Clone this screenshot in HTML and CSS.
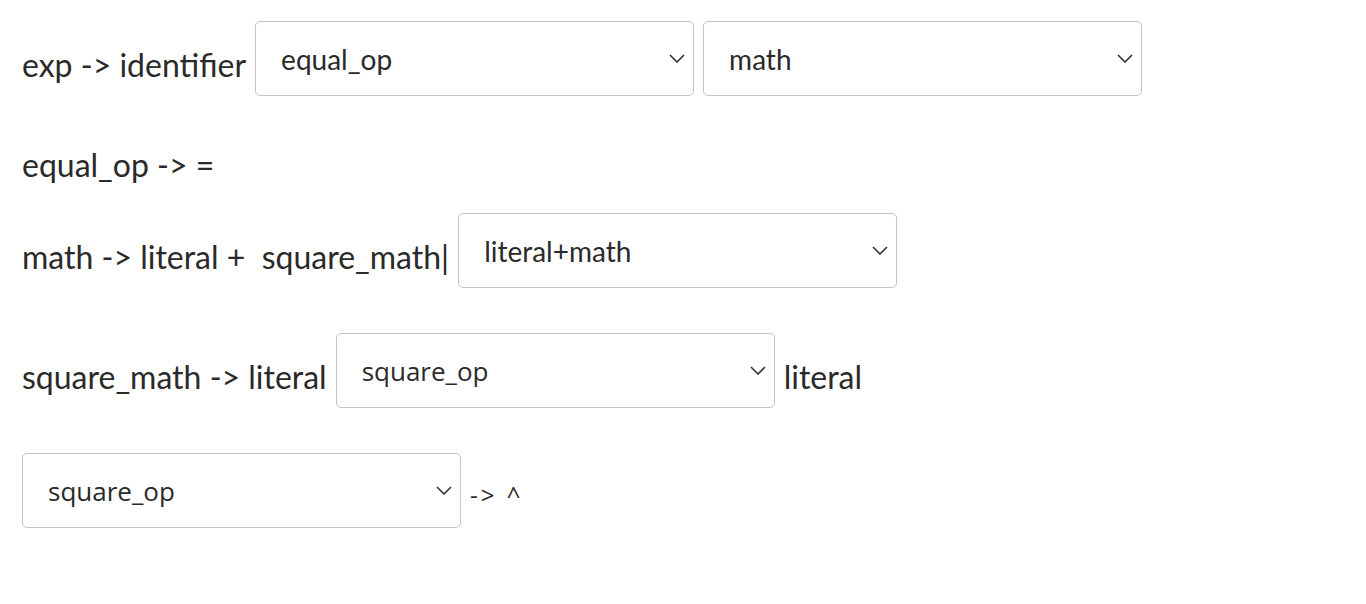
FILE: index.html
```html
<!DOCTYPE html>
<html lang="en">
<head>
    <meta charset="UTF-8">
    <meta name="viewport" content="width=device-width, initial-scale=1.0">
    <title>Grammar</title>
    <link rel="stylesheet" href="styles.css">
</head>
<body>
    <div class="grammar">
        <div class="rule rule1">
            <span class="label">exp -&gt; identifier</span>
            <span class="pick_box">
                <select class="pick">
                    <option>equal_op</option>
                    <option>math</option>
                </select>
                <svg class="arrow" viewBox="0 0 16 9"><path d="M1 1l7 7 7-7"/></svg>
            </span>
            <span class="pick_box">
                <select class="pick">
                    <option>math</option>
                    <option>equal_op</option>
                </select>
                <svg class="arrow" viewBox="0 0 16 9"><path d="M1 1l7 7 7-7"/></svg>
            </span>
        </div>
        <div class="rule rule2">
            <span class="label">equal_op -&gt; =</span>
        </div>
        <div class="rule">
            <span class="label">math -&gt; literal + &nbsp;square_math|</span>
            <span class="pick_box">
                <select class="pick">
                    <option>literal+math</option>
                    <option>literal</option>
                </select>
                <svg class="arrow" viewBox="0 0 16 9"><path d="M1 1l7 7 7-7"/></svg>
            </span>
        </div>
        <div class="rule">
            <span class="label">square_math -&gt; literal</span>
            <span class="pick_box">
                <select class="pick alt">
                    <option>square_op</option>
                    <option>equal_op</option>
                </select>
                <svg class="arrow" viewBox="0 0 16 9"><path d="M1 1l7 7 7-7"/></svg>
            </span>
            <span class="label">literal</span>
        </div>
        <div class="rule">
            <span class="pick_box">
                <select class="pick alt">
                    <option>square_op</option>
                    <option>equal_op</option>
                </select>
                <svg class="arrow" viewBox="0 0 16 9"><path d="M1 1l7 7 7-7"/></svg>
            </span>
            <span class="small">-&gt; ^</span>
        </div>
    </div>
</body>
</html>
```

FILE: styles.css
```css
*{
    margin: 0;
    padding: 0;
}
body{
    font-family: Lato, "Liberation Sans", sans-serif;
    color: #2a2a2a;
    background: #fff;
}
.grammar{
    padding: 21px 22px;
}
.rule{
    display: flex;
    align-items: center;
    gap: 9px;
    margin-bottom: 45px;
}
.rule2{
    height: 40px;
    margin-bottom: 32px;
}
.label{
    font-size: 32px;
    padding-top: 12px;
    white-space: pre;
}
.rule2 .label{
    padding-top: 6px;
}
.pick_box{
    position: relative;
    display: block;
}
.pick{
    display: block;
    width: 439px;
    height: 75px;
    border: 1px solid #c4c4c4;
    border-radius: 5px;
    background: #fff;
    color: #2a2a2a;
    font-family: Lato, sans-serif;
    font-size: 28px;
    padding: 0 40px 0 25px;
    appearance: none;
    -webkit-appearance: none;
    outline: none;
}
.pick.alt{
    font-family: "Open Sans", sans-serif;
    font-size: 26px;
}
.arrow{
    position: absolute;
    right: 9px;
    top: 33px;
    width: 16px;
    height: 9px;
    fill: none;
    stroke: #333;
    stroke-width: 1.6;
    pointer-events: none;
}
.small{
    font-family: "Open Sans", sans-serif;
    font-size: 24px;
    letter-spacing: 3px;
    padding-top: 8px;
}
```
